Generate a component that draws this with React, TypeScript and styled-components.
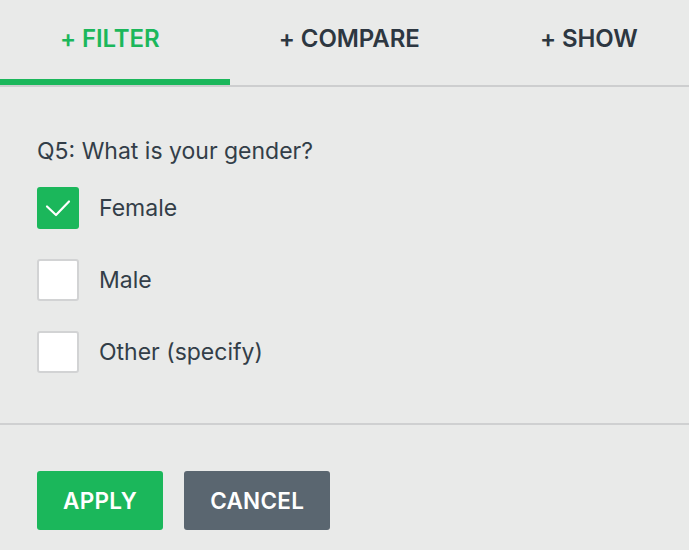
import { styled, createGlobalStyle } from "styled-components";

const GlobalStyle = createGlobalStyle`
  html, body {
    margin: 0;
    padding: 0;
    background: #e9eae9;
    overflow: hidden;
  }
  body {
    font-family: Inter, "Noto Sans", sans-serif;
    color: #333e48;
  }
`;

const options = [
  { label: "Female", checked: true },
  { label: "Male", checked: false },
  { label: "Other (specify)", checked: false },
];

const App = () => {
  return (
    <Page>
      <GlobalStyle />
      <TabBar>
        <TabRow>
          <Tab $active>+ FILTER</Tab>
          <Tab>+ COMPARE</Tab>
          <Tab>+ SHOW</Tab>
        </TabRow>
      </TabBar>
      <Body>
        <Question>Q5: What is your gender?</Question>
        <OptionList>
          {options.map((o) => (
            <Option key={o.label}>
              <Box $checked={o.checked}>
                {o.checked && (
                  <svg width="42" height="42" viewBox="0 0 42 42">
                    <path
                      d="M10 19.5 L19 28 L32 14.5"
                      fill="none"
                      stroke="#fff"
                      strokeWidth="2.2"
                      strokeLinecap="round"
                      strokeLinejoin="round"
                    />
                  </svg>
                )}
              </Box>
              <Label>{o.label}</Label>
            </Option>
          ))}
        </OptionList>
      </Body>
      <Footer>
        <Button $kind="apply">APPLY</Button>
        <Button $kind="cancel">CANCEL</Button>
      </Footer>
    </Page>
  );
};

export default App;

const Page = styled.div`
  width: 689px;
  height: 550px;
  background: #e9eae9;
  display: flex;
  flex-direction: column;
`;

const TabBar = styled.div`
  height: 85px;
  border-bottom: 2px solid #cdcecf;
  overflow: hidden;
`;

const TabRow = styled.div`
  display: flex;
  margin-left: -10px;
  height: 100%;
`;

const Tab = styled.div<{ $active?: boolean }>`
  flex: 0 0 239.5px;
  height: 100%;
  box-sizing: border-box;
  display: flex;
  justify-content: center;
  padding-top: 24px;
  font-size: 24px;
  font-weight: 600;
  letter-spacing: -0.1px;
  color: ${(p) => (p.$active ? "#1bb75b" : "#2d3741")};
  border-bottom: 6px solid ${(p) => (p.$active ? "#1bb75b" : "transparent")};
`;

const Body = styled.div`
  padding: 50px 37px 0;
  height: 338px;
  box-sizing: border-box;
  border-bottom: 2px solid #cfd0d1;
`;

const Question = styled.div`
  font-size: 23px;
  line-height: 28px;
  margin-bottom: 22px;
`;

const OptionList = styled.div`
  display: flex;
  flex-direction: column;
  gap: 30px;
`;

const Option = styled.div`
  display: flex;
  align-items: center;
  gap: 20px;
`;

const Box = styled.div<{ $checked?: boolean }>`
  width: 42px;
  height: 42px;
  box-sizing: border-box;
  border-radius: 3px;
  background: ${(p) => (p.$checked ? "#1bb75b" : "#fff")};
  border: ${(p) => (p.$checked ? "none" : "2px solid #d2d3d4")};
  display: flex;
  svg {
    display: block;
  }
`;

const Label = styled.span`
  font-size: 23px;
  color: #333e48;
`;

const Footer = styled.div`
  display: flex;
  gap: 21px;
  padding: 46px 37px 0;
`;

const Button = styled.div<{ $kind: "apply" | "cancel" }>`
  height: 59px;
  padding: 0 26px;
  display: flex;
  align-items: center;
  border-radius: 3px;
  background: ${(p) => (p.$kind === "apply" ? "#1bb75b" : "#5a6670")};
  color: #fff;
  font-size: 22.5px;
  font-weight: 600;
  letter-spacing: 0.3px;
`;
